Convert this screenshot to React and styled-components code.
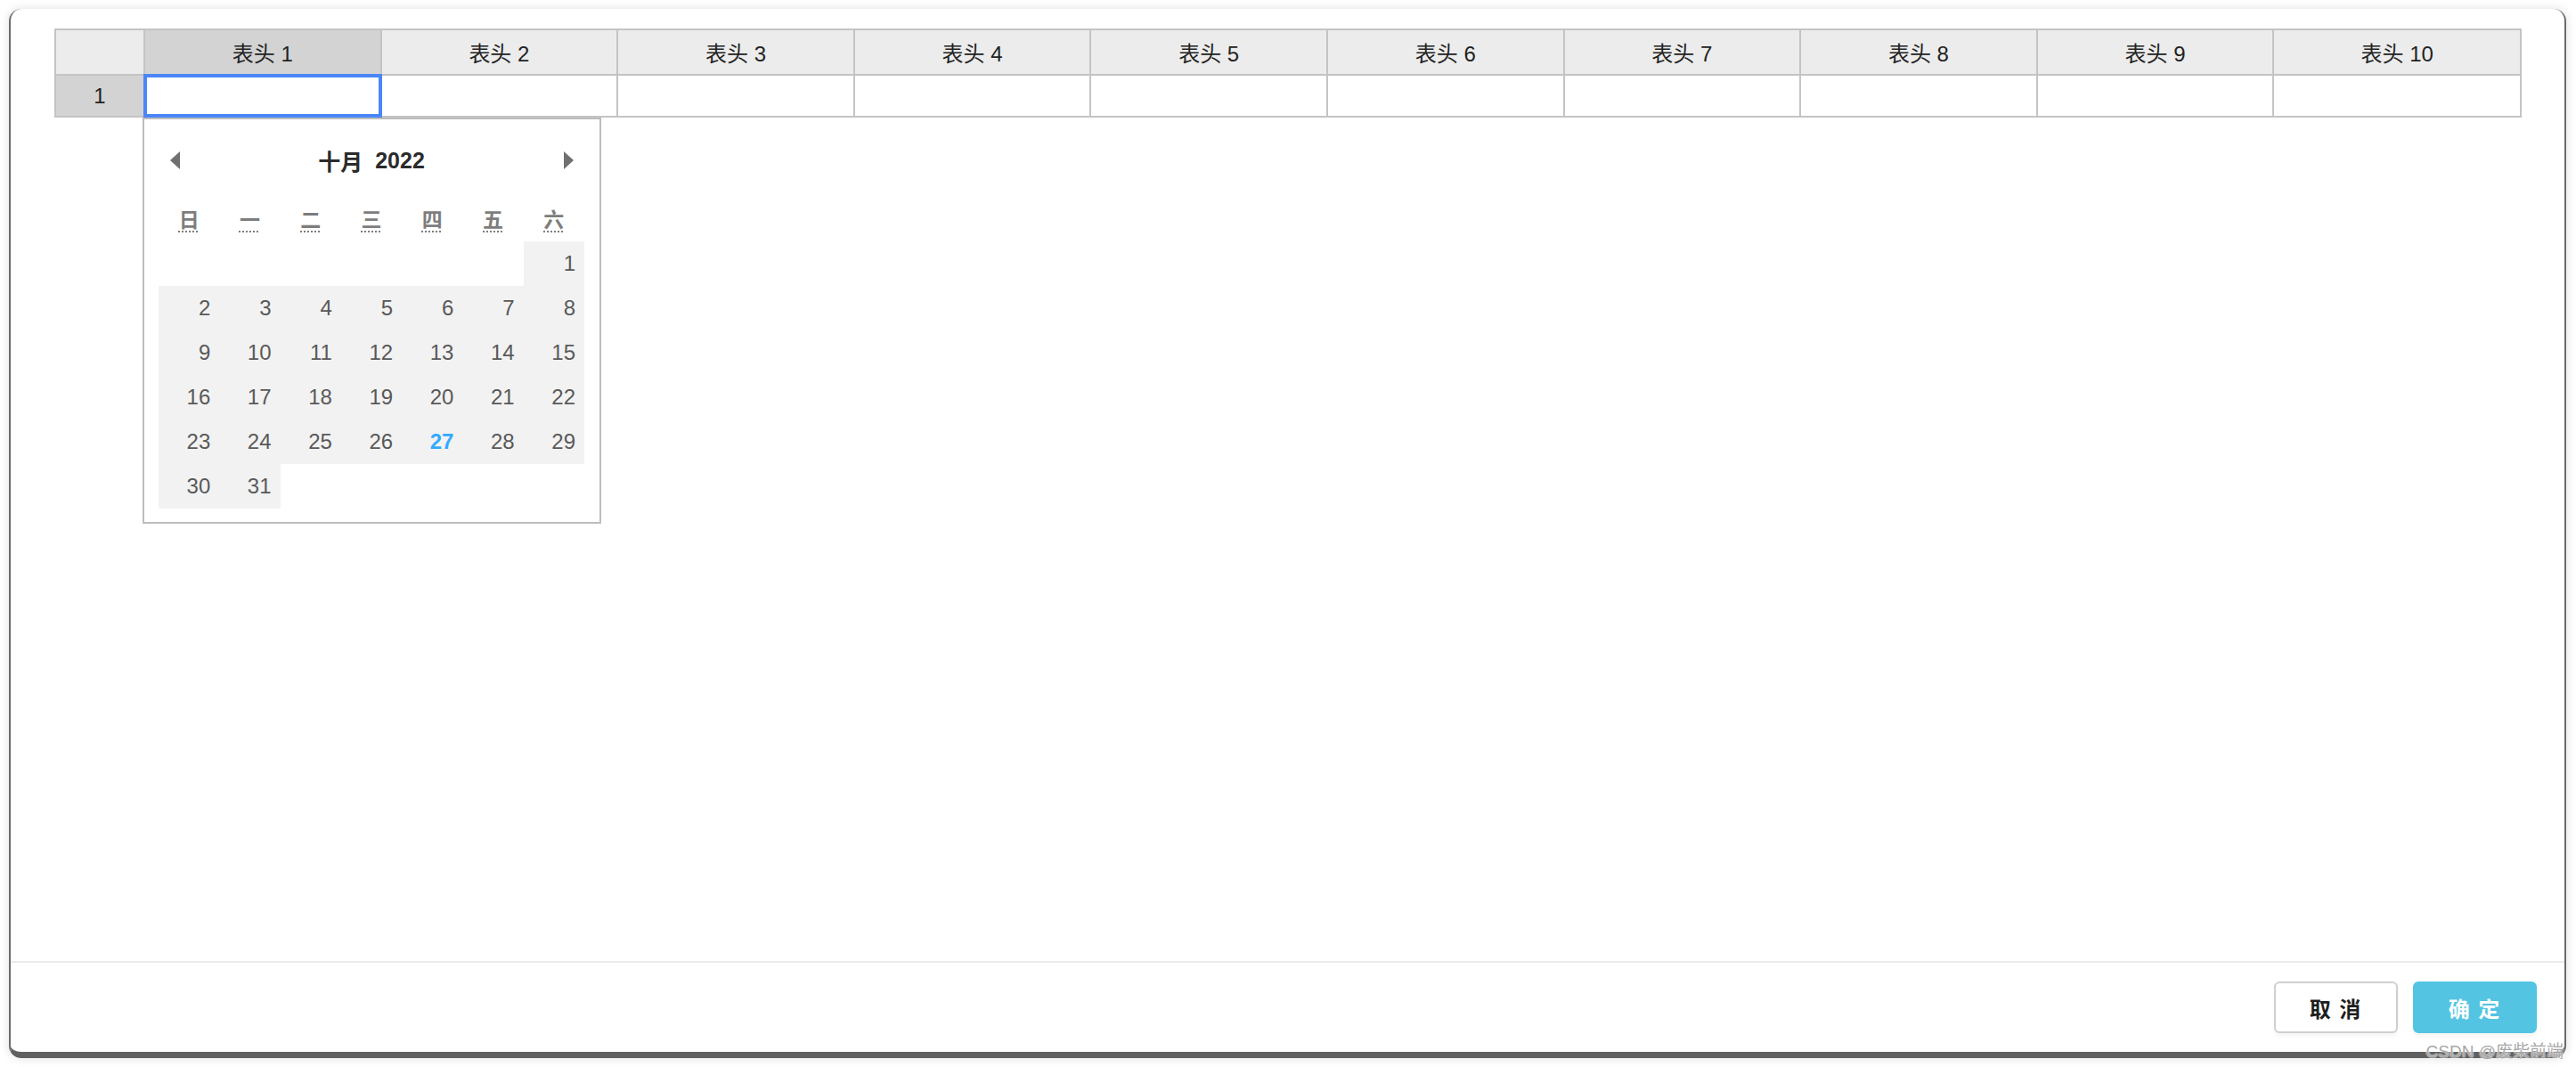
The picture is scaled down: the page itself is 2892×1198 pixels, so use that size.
import React from "react";
import styled, { createGlobalStyle } from "styled-components";

const GlobalStyle = createGlobalStyle`
  * { box-sizing: border-box; }
  html, body {
    margin: 0;
    padding: 0;
    background: #ffffff;
    font-family: "Liberation Sans", "Noto Sans CJK SC", sans-serif;
  }
`;

const Page = styled.div`
  position: relative;
  width: 2892px;
  height: 1198px;
  padding: 10px 11px 10px 10px;
`;

const Modal = styled.div`
  display: flex;
  flex-direction: column;
  height: 1178px;
  background: #ffffff;
  border-radius: 14px;
  border-left: 2px solid #6b6b6b;
  border-right: 2px solid #6b6b6b;
  border-bottom: 7px solid #606060;
  box-shadow: 0 0 12px rgba(0, 0, 0, 0.12);
`;

const Body = styled.div`
  flex: 1;
  padding: 22px 0 0 49px;
`;

const TableWrap = styled.div`
  position: relative;
  width: 2770px;
`;

const Grid = styled.div`
  display: grid;
  grid-template-columns: 100px repeat(9, 265.6px) 1fr;
  grid-template-rows: 51px 47px;
  border-top: 2px solid #c4c4c4;
  border-left: 2px solid #c4c4c4;
`;

const HeadCell = styled.div`
  display: flex;
  align-items: center;
  justify-content: center;
  background: ${(p) => (p.$active ? "#d3d3d3" : "#ececec")};
  border-right: 2px solid #c4c4c4;
  border-bottom: 2px solid #c4c4c4;
  font-size: 24px;
  color: #222;
`;

const Cell = styled.div`
  position: relative;
  background: #fff;
  border-right: 2px solid #c4c4c4;
  border-bottom: 2px solid #c4c4c4;
  ${(p) =>
    p.$selected &&
    `
    &::after {
      content: "";
      position: absolute;
      left: -2px;
      top: -2px;
      right: -2px;
      bottom: -2px;
      border: 4px solid #4a86f7;
    }
  `}
`;

const Picker = styled.div`
  position: absolute;
  left: 99px;
  top: 100px;
  width: 515px;
  background: #fff;
  border: 2px solid #bdbdbd;
  padding: 0 17px 15px 16px;
  z-index: 5;
`;

const PickerTitle = styled.div`
  position: relative;
  display: flex;
  align-items: center;
  justify-content: center;
  gap: 14px;
  height: 92px;
  font-size: 25px;
  font-weight: bold;
  color: #2b2b2b;
`;

const MonthLabel = styled.span`
  font-family: "Noto Sans CJK SC", sans-serif;
`;

const Arrow = styled.span`
  position: absolute;
  top: 36px;
  ${(p) => (p.$dir === "prev" ? "left: 13px;" : "right: 12px;")}
  width: 0;
  height: 0;
  border-top: 10.5px solid transparent;
  border-bottom: 10.5px solid transparent;
  ${(p) =>
    p.$dir === "prev"
      ? "border-right: 11px solid #707070;"
      : "border-left: 11px solid #707070;"}
`;

const WeekRow = styled.div`
  display: grid;
  grid-template-columns: repeat(7, 1fr);
  height: 45px;
  padding-bottom: 6px;
  align-items: center;
`;

const WeekDay = styled.abbr`
  text-align: center;
  font-size: 23px;
  line-height: 1;
  font-weight: bold;
  color: #7d7d7d;
  text-decoration: underline dotted;
  text-underline-offset: 4px;
  text-decoration-thickness: 2px;
  font-family: "Noto Sans CJK SC", sans-serif;
`;

const DayGrid = styled.div`
  display: grid;
  grid-template-columns: repeat(7, 1fr);
  grid-auto-rows: 50px;
`;

const Day = styled.div`
  display: flex;
  align-items: center;
  justify-content: flex-end;
  padding-right: 10px;
  background: ${(p) => (p.$empty ? "transparent" : "#f2f2f2")};
  font-size: 24px;
  color: ${(p) => (p.$today ? "#33aaff" : "#595959")};
  font-weight: ${(p) => (p.$today ? "bold" : "normal")};
`;

const Footer = styled.div`
  display: flex;
  justify-content: flex-end;
  align-items: center;
  gap: 17px;
  height: 102px;
  padding-right: 31px;
  border-top: 2px solid #ebebeb;
`;

const Button = styled.button`
  width: 139px;
  height: 58px;
  border-radius: 6px;
  font-family: "Noto Sans CJK SC", sans-serif;
  font-size: 24px;
  font-weight: 600;
  letter-spacing: 2px;
  cursor: pointer;
  box-shadow: 0 4px 4px rgba(0, 0, 0, 0.04);
  background: ${(p) => (p.$primary ? "#53c4e2" : "#ffffff")};
  color: ${(p) => (p.$primary ? "#ffffff" : "#1e1e1e")};
  border: ${(p) => (p.$primary ? "2px solid #53c4e2" : "2px solid #cfcfcf")};
`;

const Watermark = styled.div`
  position: absolute;
  right: 14px;
  bottom: 6px;
  font-size: 19px;
  color: rgba(150, 150, 150, 0.85);
  text-shadow: 0 0 2px #fff, 0 0 2px #fff;
`;

const headers = Array.from({ length: 10 }, (_, i) => `表头 ${i + 1}`);
const weekdays = ["日", "一", "二", "三", "四", "五", "六"];
const weekTitles = ["星期日", "星期一", "星期二", "星期三", "星期四", "星期五", "星期六"];

// 2022年10月1日是星期六，前面空6格
const days = [...Array(6).fill(null), ...Array.from({ length: 31 }, (_, i) => i + 1)];

const App = () => {
  return (
    <>
      <GlobalStyle />
      <Page>
        <Modal>
          <Body>
            <TableWrap>
              <Grid>
                <HeadCell />
                {headers.map((h, i) => (
                  <HeadCell key={h} $active={i === 0}>
                    {h}
                  </HeadCell>
                ))}
                <HeadCell $active>1</HeadCell>
                {headers.map((h, i) => (
                  <Cell key={h} $selected={i === 0} />
                ))}
              </Grid>

              <Picker>
                <PickerTitle>
                  <Arrow $dir="prev" />
                  <MonthLabel>十月</MonthLabel>
                  <span>2022</span>
                  <Arrow $dir="next" />
                </PickerTitle>
                <WeekRow>
                  {weekdays.map((w, i) => (
                    <WeekDay key={w} title={weekTitles[i]}>
                      {w}
                    </WeekDay>
                  ))}
                </WeekRow>
                <DayGrid>
                  {days.map((d, i) =>
                    d === null ? (
                      <Day key={"e" + i} $empty />
                    ) : (
                      <Day key={d} $today={d === 27}>
                        {d}
                      </Day>
                    )
                  )}
                </DayGrid>
              </Picker>
            </TableWrap>
          </Body>
          <Footer>
            <Button>取 消</Button>
            <Button $primary>确 定</Button>
          </Footer>
        </Modal>
        <Watermark>CSDN @废柴前端</Watermark>
      </Page>
    </>
  );
};

export default App;
